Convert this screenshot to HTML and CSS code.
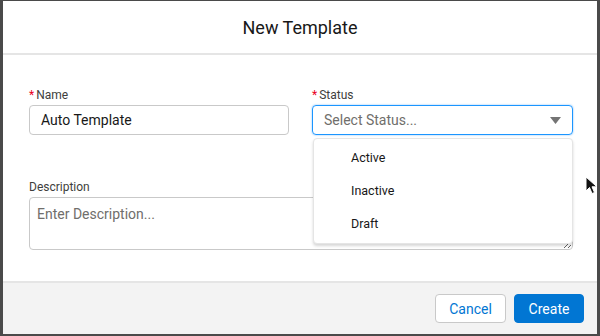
FILE: index.html
```html
<!DOCTYPE html>
<html>
<head>
<meta charset="utf-8">
<link rel="stylesheet" href="styles.css">
</head>
<body>
<div class="modal">
  <header class="modal-header"><h2 class="title">New Template</h2></header>
  <main class="modal-body">
    <div class="row">
      <div class="field">
        <label class="label"><abbr class="req">*</abbr>Name</label>
        <div class="input">Auto Template</div>
      </div>
      <div class="field">
        <label class="label"><abbr class="req">*</abbr>Status</label>
        <div class="combo">
          <div class="input select"><span class="placeholder">Select Status...</span>
            <svg class="caret" width="11" height="7" viewBox="0 0 11 7"><path d="M0 0 L11 0 L5.5 7 Z" fill="#747474"/></svg>
          </div>
          <ul class="listbox">
            <li class="option">Active</li>
            <li class="option">Inactive</li>
            <li class="option">Draft</li>
          </ul>
        </div>
      </div>
    </div>
    <div class="field wide">
      <label class="label">Description</label>
      <textarea class="textarea" placeholder="Enter Description..."></textarea>
    </div>
  </main>
  <footer class="modal-footer">
    <button class="btn neutral">Cancel</button>
    <button class="btn brand">Create</button>
  </footer>
</div>
<svg class="cursor" width="14" height="20" viewBox="0 0 14 20"><path d="M1 1 L1 15 L4.5 11.5 L7 17.5 L9.5 16.5 L7 10.8 L12 10.8 Z" fill="#111" stroke="#fff" stroke-width="1"/></svg>
</body>
</html>
```
FILE: styles.css
```css
* { box-sizing: border-box; }
html, body { margin: 0; padding: 0; }
body {
  width: 600px; height: 336px; overflow: hidden;
  background: #4a4a4a;
  font-family: Roboto, "Liberation Sans", Arial, sans-serif;
  color: #181818;
  position: relative;
}
.modal {
  margin: 1px 3px 0 3px;
  height: 333px;
  background: #fff;
  display: flex;
  flex-direction: column;
}
.modal-header {
  height: 54px;
  border-bottom: 2px solid #e5e5e5;
  display: flex; align-items: center; justify-content: center;
}
.title { margin: 0; font-size: 18px; font-weight: 400; color: #181818; }
.modal-body {
  flex: 1;
  padding: 32px 24px 0 26px;
}
.row { display: grid; grid-template-columns: 260px 261px; column-gap: 23px; }
.field { display: flex; flex-direction: column; }
.label { font-size: 12px; color: #3e3e3c; line-height: 16px; margin-bottom: 2px; }
.req { color: #ea001e; text-decoration: none; margin-right: 2px; font-size: 12px; }
.input {
  height: 30px; border: 1px solid #c9c9c9; border-radius: 4px;
  padding: 0 11px; font-size: 14px; line-height: 28px; color: #181818;
}
.combo { position: relative; }
.select { border-color: #1b96ff; box-shadow: 0 0 2px #7ab8f5; display: flex; align-items: center; justify-content: space-between; }
.placeholder { color: #706e6b; }
.caret { margin-right: 0; margin-top: 1px; }
.listbox {
  position: absolute; top: 33px; left: 1px; width: 260px; height: 106px;
  margin: 0; padding: 2px 0 0 0; list-style: none;
  background: #fff; border-radius: 4px;
  border: 1px solid #e5e5e5;
  box-shadow: 0 2px 3px rgba(0,0,0,0.16);
  z-index: 2;
}
.option { height: 33px; line-height: 33px; padding-left: 37px; font-size: 12.5px; color: #181818; }
.wide { margin-top: 44px; width: 544px; }
.textarea {
  height: 53px; border: 1px solid #c9c9c9; border-radius: 4px;
  padding: 8px 7px; font-family: inherit; font-size: 14px; resize: vertical;
  outline: none;
}
.textarea::placeholder { color: #706e6b; }
.modal-footer {
  height: 53px;
  background: #f3f3f3;
  border-top: 2px solid #e5e5e5;
  display: flex; justify-content: flex-end; align-items: center;
  padding: 0 13px 0 0; gap: 8px;
}
.btn {
  height: 29px; border-radius: 4px; font-family: inherit; font-size: 14px;
  padding: 0; cursor: pointer;
}
.neutral { width: 71px; background: #fff; border: 1px solid #c9c9c9; color: #0176d3; }
.brand { width: 70px; background: #0176d3; border: 1px solid #0176d3; color: #fff; }
.cursor { position: absolute; left: 585px; top: 176px; }
```
